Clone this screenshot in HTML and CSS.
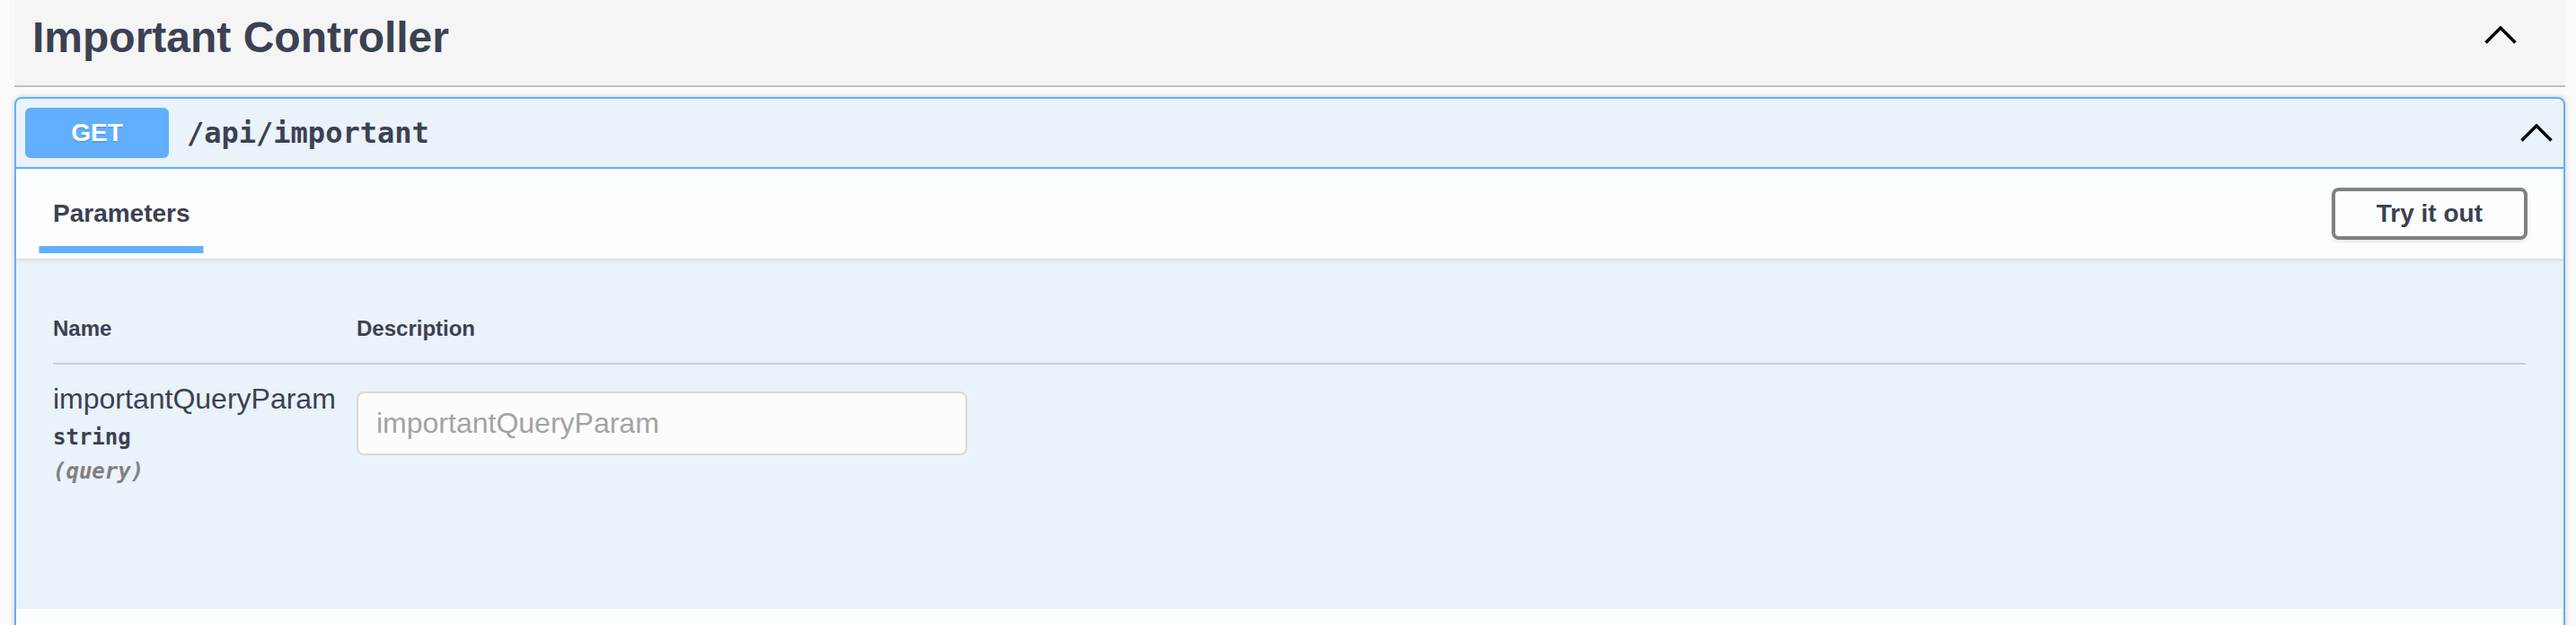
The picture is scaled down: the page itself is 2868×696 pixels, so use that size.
FILE: index.html
```html
<!DOCTYPE html>
<html lang="en">
<head>
    <meta charset="UTF-8">
    <meta name="viewport" content="width=device-width, initial-scale=1.0">
    <title>Important Controller - API</title>
    <link rel="stylesheet" href="styles.css">
</head>
<body>
    <div class="wrapper">
        <div class="tag-section">
            <div class="tag-header">
                <h3 class="tag-title">Important Controller</h3>
                <svg class="chevron tag-chevron" width="36" height="20" viewBox="0 0 36 20">
                    <polyline points="1.5,18.5 18,2 34.5,18.5" />
                </svg>
            </div>

            <div class="opblock opblock-get">
                <div class="opblock-summary">
                    <span class="method">GET</span>
                    <span class="path">/api/important</span>
                    <svg class="chevron op-chevron" width="36" height="20" viewBox="0 0 36 20">
                        <polyline points="1.5,18.5 18,2 34.5,18.5" />
                    </svg>
                </div>

                <div class="section-header">
                    <div class="tab-header">
                        <h4 class="tab-item"><span>Parameters</span></h4>
                    </div>
                    <button class="try-out">Try it out</button>
                </div>

                <div class="table-container">
                    <div class="params-head">
                        <div class="col-name">Name</div>
                        <div class="col-desc">Description</div>
                    </div>
                    <div class="params-row">
                        <div class="col-name">
                            <div class="param-name">importantQueryParam</div>
                            <div class="param-type">string</div>
                            <div class="param-in">(query)</div>
                        </div>
                        <div class="col-desc">
                            <input class="param-input" type="text" placeholder="importantQueryParam" disabled>
                        </div>
                    </div>
                </div>

                <div class="section-header responses-header"></div>
            </div>
        </div>
    </div>
</body>
</html>
```

FILE: styles.css
```css
body {
    margin: 0;
    background-color: #fafafa;
    font-family: "Liberation Sans", Arial, sans-serif;
    color: #3b4151;
}
.wrapper {
    padding: 0 12px 0 16px;
}
.tag-header {
    display: flex;
    align-items: center;
    height: 95px;
    padding: 0 54px 0 20px;
    background-color: #f5f5f5;
    border-bottom: 2px solid rgba(59, 65, 81, 0.3);
    margin-bottom: 11px;
}
.tag-title {
    flex: 1;
    margin: 0;
    padding-bottom: 12px;
    font-size: 48px;
    font-weight: 700;
}
.chevron {
    display: block;
    fill: none;
    stroke: #000;
    stroke-width: 3.5;
}
.tag-chevron {
    margin-bottom: 18px;
}
.opblock {
    border: 2px solid #61affe;
    border-radius: 8px;
    background-color: rgba(97, 175, 254, 0.1);
    box-shadow: 0 0 6px rgba(0, 0, 0, 0.19);
    overflow: hidden;
}
.opblock-summary {
    display: flex;
    align-items: center;
    padding: 10px;
    border-bottom: 2px solid #61affe;
}
.method {
    min-width: 160px;
    padding: 12px 0;
    line-height: 32px;
    font-size: 28px;
    font-weight: 700;
    text-align: center;
    color: #fff;
    background-color: #61affe;
    border-radius: 6px;
    text-shadow: 0 2px 0 rgba(0, 0, 0, 0.1);
}
.path {
    flex: 1;
    padding: 0 20px;
    font-family: "DejaVu Sans Mono", monospace;
    font-weight: 700;
    font-size: 32px;
}
.op-chevron {
    margin-right: 2px;
}
.section-header {
    display: flex;
    align-items: center;
    min-height: 100px;
    padding: 0 40px;
    box-sizing: border-box;
    background-color: rgba(255, 255, 255, 0.8);
    box-shadow: 0 2px 4px rgba(0, 0, 0, 0.1);
}
.tab-header {
    flex: 1;
    display: flex;
}
.tab-item {
    margin: 0 0 0 1px;
    font-size: 28px;
    font-weight: 700;
}
.tab-item span {
    position: relative;
}
.tab-item span::after {
    content: "";
    position: absolute;
    left: 50%;
    bottom: -29px;
    width: 120%;
    height: 8px;
    transform: translateX(-50%);
    background-color: #61affe;
}
.try-out {
    padding: 10px 46px;
    line-height: 30px;
    font-family: "Liberation Sans", Arial, sans-serif;
    font-size: 28px;
    font-weight: 700;
    color: #3b4151;
    background: transparent;
    border: 4px solid #808080;
    border-radius: 8px;
    box-shadow: 0 2px 4px rgba(0, 0, 0, 0.1);
}
.table-container {
    padding: 40px 42px 119px 41px;
}
.params-head,
.params-row {
    display: grid;
    grid-template-columns: 338px 1fr;
}
.params-head {
    padding: 24px 0;
    font-size: 24px;
    font-weight: 700;
    border-bottom: 2px solid rgba(59, 65, 81, 0.2);
}
.params-row {
    padding: 20px 0;
}
.param-name {
    font-size: 32px;
}
.param-type {
    padding: 10px 0;
    font-family: "DejaVu Sans Mono", monospace;
    font-size: 24px;
    font-weight: 700;
}
.param-in {
    font-family: "DejaVu Sans Mono", monospace;
    font-size: 24px;
    font-weight: 700;
    font-style: italic;
    color: #808080;
}
.param-input {
    display: block;
    width: 680px;
    box-sizing: border-box;
    margin: 10px 0;
    padding: 16px 20px;
    line-height: 35px;
    font-family: "Liberation Sans", Arial, sans-serif;
    font-size: 32px;
    color: #3b4151;
    background-color: #fcfcfc;
    border: 2px solid #d9d9d9;
    border-radius: 8px;
}
.param-input::placeholder {
    color: #a3a3a3;
}
```
